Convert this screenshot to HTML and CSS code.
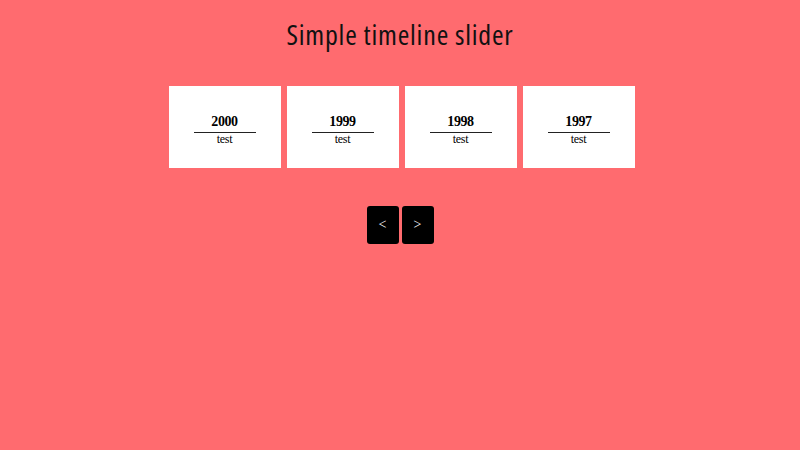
FILE: index.html
```html
<!DOCTYPE html>
<html lang="en">
<head>
<meta charset="utf-8">
<title>Simple timeline slider</title>
<link rel="stylesheet" href="styles.css">
</head>
<body>
<main class="page">
  <h1 class="title">Simple timeline slider</h1>
  <section class="timeline">
    <div class="slide"><div class="year">2000</div><div class="label">test</div></div>
    <div class="slide"><div class="year">1999</div><div class="label">test</div></div>
    <div class="slide"><div class="year">1998</div><div class="label">test</div></div>
    <div class="slide"><div class="year">1997</div><div class="label">test</div></div>
  </section>
  <nav class="controls">
    <button class="nav-btn" type="button">&lt;</button>
    <button class="nav-btn" type="button">&gt;</button>
  </nav>
</main>
</body>
</html>
```
FILE: styles.css
```css
html, body {
  margin: 0;
  padding: 0;
  background: #ff6b6f;
  height: 100%;
}

.page {
  display: flex;
  flex-direction: column;
  align-items: center;
}

.title {
  margin: 15px 0 0;
  font-family: "Open Sans", sans-serif;
  font-weight: 380;
  font-stretch: 87.5%;
  font-size: 28px;
  line-height: 38px;
  letter-spacing: 0.8px;
  color: #111;
}

.timeline {
  display: flex;
  gap: 6px;
  margin-top: 33px;
  padding-left: 3px;
}

.slide {
  width: 112px;
  height: 82px;
  background: #fff;
  display: flex;
  flex-direction: column;
  align-items: center;
  justify-content: center;
  font-family: "Liberation Serif", serif;
  color: #000;
}

.year {
  width: 62px;
  text-align: center;
  font-weight: bold;
  font-size: 14px;
  line-height: 16px;
  padding: 4px 0 2px;
  letter-spacing: -0.4px;
  border-bottom: 1px solid #222;
}

.label {
  font-size: 12px;
  line-height: 12px;
  letter-spacing: -0.3px;
}

.controls {
  display: flex;
  gap: 3px;
  margin-top: 38px;
}

.nav-btn {
  width: 32px;
  height: 38px;
  padding: 0;
  border: none;
  border-radius: 3px;
  background: #000;
  color: #fff;
  font-family: "Liberation Serif", serif;
  font-size: 14px;
}
```
